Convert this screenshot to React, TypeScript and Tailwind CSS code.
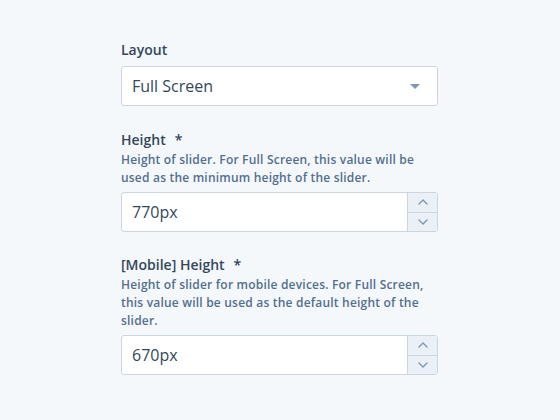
import { useState } from 'react';

const font = { fontFamily: '"Open Sans", "Noto Sans", sans-serif' };

function NumberField({ value }: { value: string }) {
  return (
    <div className="mt-[5px] flex h-10 rounded-[3px] border border-[#cbd6e2] bg-white">
      <div className="flex flex-1 items-center px-[10px] text-base text-[#33475b]">{value}</div>
      <div className="flex w-[30px] flex-col border-l border-[#cbd6e2] bg-[#eaf0f6]">
        <button className="flex flex-1 items-center justify-center border-b border-[#cbd6e2]">
          <svg width="10" height="6" viewBox="0 0 10 6" fill="none">
            <path d="M1 5l4-4 4 4" stroke="#7c98b6" strokeWidth="1.4" strokeLinecap="round" strokeLinejoin="round" />
          </svg>
        </button>
        <button className="flex flex-1 items-center justify-center">
          <svg width="10" height="6" viewBox="0 0 10 6" fill="none">
            <path d="M1 1l4 4 4-4" stroke="#7c98b6" strokeWidth="1.4" strokeLinecap="round" strokeLinejoin="round" />
          </svg>
        </button>
      </div>
    </div>
  );
}

function Label({ text, required }: { text: string; required?: boolean }) {
  return (
    <div className="text-sm font-semibold leading-5 text-[#33475b]">
      {text}
      {required && <span className="ml-[9px]">*</span>}
    </div>
  );
}

export default function App() {
  const [layout] = useState('Full Screen');

  return (
    <div className="min-h-[420px] bg-[#f5f8fa] pl-[121px] pt-10" style={font}>
      <div className="w-[317px]">
        <Label text="Layout" />
        <div className="mt-[6px] flex h-10 items-center justify-between rounded-[3px] border border-[#cbd6e2] bg-white px-[10px]">
          <span className="text-base text-[#33475b]">{layout}</span>
          <svg width="12" height="7" viewBox="0 0 12 7" className="mr-[6px]">
            <path d="M1 1h10L6 6z" fill="#7c98b6" />
          </svg>
        </div>

        <div className="mt-6">
          <Label text="Height" required />
          <p className="mt-px text-xs font-semibold leading-[18px] tracking-[0.2px] text-[#516f90]">
            Height of slider. For Full Screen, this value will be used as the minimum height of the slider.
          </p>
          <NumberField value="770px" />
        </div>

        <div className="mt-[23px]">
          <Label text="[Mobile] Height" required />
          <p className="mt-px text-xs font-semibold leading-[18px] tracking-[0.2px] text-[#516f90]">
            Height of slider for mobile devices. For Full Screen, this value will be used as the default height of the slider.
          </p>
          <NumberField value="670px" />
        </div>
      </div>
    </div>
  );
}
